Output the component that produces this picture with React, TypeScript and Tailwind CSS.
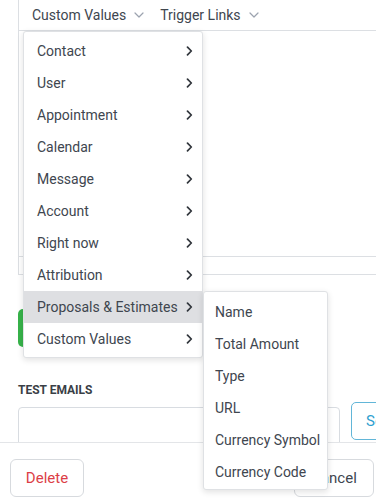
import React from "react";

const font = { fontFamily: "Roboto, 'Noto Sans', sans-serif" };

function Chevron() {
  return (
    <svg width="7" height="10" viewBox="0 0 7 10" fill="none" className="shrink-0">
      <path d="M1.5 1.2 5.3 5 1.5 8.8" stroke="#30353b" strokeWidth="1.7" strokeLinecap="round" strokeLinejoin="round" />
    </svg>
  );
}

function Down() {
  return (
    <svg width="10" height="6" viewBox="0 0 10 6" fill="none" className="shrink-0">
      <path d="M1 1l4 4 4-4" stroke="#9ca3af" strokeWidth="1.2" strokeLinecap="round" strokeLinejoin="round" />
    </svg>
  );
}

const mainItems = [
  "Contact",
  "User",
  "Appointment",
  "Calendar",
  "Message",
  "Account",
  "Right now",
  "Attribution",
  "Proposals & Estimates",
  "Custom Values",
];

const subItems = ["Name", "Total Amount", "Type", "URL", "Currency Symbol", "Currency Code"];

export default function App() {
  return (
    <div className="relative w-[376px] h-[499px] overflow-hidden bg-white text-[#40464f]" style={font}>
      <div className="flex flex-col h-full">
        <div className="flex-1 overflow-hidden">
          <div className="ml-[18px] w-[400px] border-l border-b border-[#dcdfe3]">
            <div className="h-[31px] border-b border-[#dcdfe3] flex items-center pl-[13px] text-[14px] text-[#40464f]">
              <span>Custom Values</span>
              <span className="ml-[8px] mr-[16px]"><Down /></span>
              <span>Trigger Links</span>
              <span className="ml-[8px]"><Down /></span>
            </div>
            <div className="h-[225px]" />
            <div className="h-[18px] border-t border-[#dcdfe3]" />
          </div>
          <div className="ml-[18px] mt-[34px] w-[90px] h-[38px] rounded-[5px] bg-[#37b34a]" />
          <div className="ml-[18px] mt-[36px] text-[12px] font-bold text-[#3a3f46] leading-[14px]">TEST EMAILS</div>
          <div className="flex items-start mt-[5px] ml-[18px] w-[420px]">
            <div className="shrink-0 w-[322px] h-[40px] mt-[5px] border border-[#d8dce1] rounded-[4px]" />
            <div className="shrink-0 ml-[11px] h-[38px] px-[14px] flex items-center border border-[#62b6d8] rounded-[5px] text-[#2f9fd0] text-[15px]">
              Send
            </div>
          </div>
        </div>
        <div className="h-[57px] border-t border-[#e3e5e8] flex items-start justify-between pl-[10px] pr-[2px] pt-[16px] shrink-0">
          <div className="h-[38px] w-[74px] flex items-center justify-center border border-[#d7dade] rounded-[6px] text-[15px] text-[#dc3e47]">
            Delete
          </div>
          <div className="h-[38px] w-[80px] flex items-center justify-center border border-[#d7dade] rounded-[6px] text-[15px] text-[#40464f]">
            Cancel
          </div>
        </div>
      </div>

      <div className="absolute left-[23px] top-[31px] w-[180px] bg-white border border-[#dfe1e4] rounded-[3px] shadow-[0_2px_6px_rgba(0,0,0,0.12)] pt-[3px] pb-[2px]">
        {mainItems.map((t) => (
          <div
            key={t}
            className={
              "h-8 flex items-center justify-between pl-[13px] pr-[9px] text-[14px] " +
              (t === "Proposals & Estimates" ? "bg-[#dedfe2]" : "")
            }
          >
            <span>{t}</span>
            <Chevron />
          </div>
        ))}
      </div>

      <div className="absolute left-[203px] top-[291px] w-[125px] bg-white border border-[#dfe1e4] rounded-[3px] shadow-[0_2px_6px_rgba(0,0,0,0.12)] pt-[4px] pb-[1px]">
        {subItems.map((t) => (
          <div key={t} className="h-8 flex items-center pl-[11px] text-[14px] whitespace-nowrap">
            {t}
          </div>
        ))}
      </div>
    </div>
  );
}
